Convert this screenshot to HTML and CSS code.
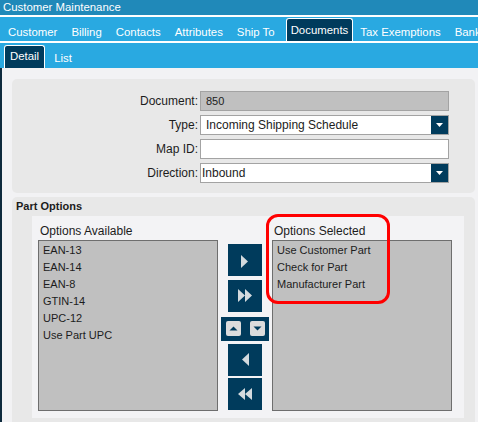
FILE: index.html
```html
<!DOCTYPE html>
<html lang="en">
<head>
    <meta charset="UTF-8">
    <title>Customer Maintenance</title>
    <link rel="stylesheet" href="styles.css">
</head>
<body>

    <!-- Window title -->
    <div class="titlebar">Customer Maintenance</div>

    <!-- Main tabs -->
    <div class="tabs">
        <span class="tab">Customer</span>
        <span class="tab">Billing</span>
        <span class="tab">Contacts</span>
        <span class="tab">Attributes</span>
        <span class="tab">Ship To</span>
        <span class="tab active">Documents</span>
        <span class="tab">Tax Exemptions</span>
        <span class="tab">Banking</span>
    </div>

    <!-- Sub tabs -->
    <div class="subtabs">
        <span class="subtab active">Detail</span>
        <span class="subtab">List</span>
    </div>

    <div class="content">

        <!-- Document header fields -->
        <div class="panel form-panel">
            <label class="field-label">Document:</label>
            <div class="input readonly">850</div>

            <label class="field-label">Type:</label>
            <div class="input select type-select">
                <span>Incoming Shipping Schedule</span>
                <span class="select-btn"><svg width="7" height="4" viewBox="0 0 7 4"><path d="M0 0h7L3.5 4z" fill="#fff"/></svg></span>
            </div>

            <label class="field-label">Map ID:</label>
            <div class="input"></div>

            <label class="field-label">Direction:</label>
            <div class="input select dir-select">
                <span>Inbound</span>
                <span class="select-btn"><svg width="7" height="4" viewBox="0 0 7 4"><path d="M0 0h7L3.5 4z" fill="#fff"/></svg></span>
            </div>
        </div>

        <!-- Part options picker -->
        <div class="panel options-panel">
            <div class="panel-title">Part Options</div>
            <div class="picker">
                <div class="col-label">Options Available</div>
                <div></div>
                <div class="col-label">Options Selected</div>

                <div class="listbox">
                    <div class="item">EAN-13</div>
                    <div class="item">EAN-14</div>
                    <div class="item">EAN-8</div>
                    <div class="item">GTIN-14</div>
                    <div class="item">UPC-12</div>
                    <div class="item">Use Part UPC</div>
                </div>

                <div class="mover">
                    <button class="move-btn btn-add">
                        <svg width="34" height="32" viewBox="0 0 34 32"><path d="M13 11L20 17.5L13 24z" fill="#d3dade"/></svg>
                    </button>
                    <button class="move-btn btn-add-all">
                        <svg width="34" height="32" viewBox="0 0 34 32"><path d="M10 9L17 15.5L10 22zM17 9L24 15.5L17 22z" fill="#d3dade"/></svg>
                    </button>
                    <div class="order-btns">
                        <span class="order-btn"><svg width="15" height="15" viewBox="0 0 15 15"><path d="M3.5 9.5h8L7.5 5.5z" fill="#003b5c"/></svg></span>
                        <span class="order-btn"><svg width="15" height="15" viewBox="0 0 15 15"><path d="M3.5 5.5h8L7.5 9.5z" fill="#003b5c"/></svg></span>
                    </div>
                    <button class="move-btn btn-remove">
                        <svg width="34" height="32" viewBox="0 0 34 32"><path d="M21 9L14 15.5L21 22z" fill="#d3dade"/></svg>
                    </button>
                    <button class="move-btn btn-remove-all">
                        <svg width="34" height="32" viewBox="0 0 34 32"><path d="M17 10L10 16L17 22zM24 10L17 16L24 22z" fill="#d3dade"/></svg>
                    </button>
                </div>

                <div class="listbox">
                    <div class="item">Use Customer Part</div>
                    <div class="item">Check for Part</div>
                    <div class="item">Manufacturer Part</div>
                </div>

                <!-- red callout round the selected list -->
                <div class="callout"></div>
            </div>
        </div>

    </div>

</body>
</html>
```

FILE: styles.css
```css
body {
    margin: 0;
    width: 478px;
    height: 422px;
    overflow: hidden;
    font-family: "Liberation Sans", Arial, sans-serif;
    color: #1c1c1c;
    background-color: #f2f2f4;
}

.titlebar {
    height: 15px;
    line-height: 15px;
    padding-left: 3px;
    background-color: #2089b9;
    color: white;
    font-size: 11.4px;
    border-bottom: 2px solid white;
}

.tabs {
    height: 24px;
    background-color: #29a9e1;
    border-bottom: 2px solid white;
    display: flex;
    padding-left: 5px;
    white-space: nowrap;
    overflow: hidden;
}

.tab {
    height: 24px;
    box-sizing: border-box;
    padding: 7px 3px 0 3px;
    margin-right: 8px;
    line-height: 16px;
    font-size: 11.4px;
    color: white;
}

.tab.active {
    margin-top: 1px;
    margin-right: 4px;
    padding-top: 3px;
    padding-left: 4px;
    padding-right: 4px;
    background-color: #003b5c;
    border: 1px solid white;
    border-bottom: none;
    border-radius: 3px 3px 0 0;
}

.subtabs {
    height: 25px;
    background-color: #29a9e1;
    display: flex;
    padding-left: 4px;
}

.subtab {
    margin-top: 2px;
    height: 23px;
    box-sizing: border-box;
    padding: 5px 8px 0 9px;
    line-height: 16px;
    font-size: 11.4px;
    color: white;
}

.subtab.active {
    padding: 2px 5px 0 5px;
    background-color: #003b5c;
    border: 1px solid white;
    border-bottom: none;
    border-radius: 3px 3px 0 0;
}

.content {
    height: 354px;
    border-left: 2px solid #0e2a3d;
    padding: 11px 0 0 10px;
}

.panel {
    width: 463px;
    background-color: #e8e8e8;
    border-radius: 5px;
}

/* Document fields */
.form-panel {
    height: 114px;
    box-sizing: border-box;
    padding-top: 12px;
    display: grid;
    grid-template-columns: 186px 249px;
    grid-auto-rows: 20px;
    column-gap: 2px;
    row-gap: 4px;
}

.field-label {
    text-align: right;
    line-height: 20px;
    font-size: 12px;
}

.input {
    height: 20px;
    box-sizing: border-box;
    border: 1px solid #a3a3a3;
    background-color: white;
    font-size: 12px;
    line-height: 18px;
    padding-left: 5px;
    display: flex;
}

.input.readonly {
    background-color: #c0c0c0;
    font-size: 11px;
}

.input.dir-select {
    padding-left: 1px;
}

.select span:first-child {
    flex: 1;
}

.select-btn {
    width: 17px;
    background-color: #003b5c;
    display: flex;
    align-items: center;
    justify-content: center;
}

/* Part options */
.options-panel {
    margin-top: 4px;
    height: 240px;
    padding-top: 2px;
    box-sizing: border-box;
}

.panel-title {
    padding-left: 4px;
    font-size: 11px;
    font-weight: bold;
    line-height: 14px;
}

.picker {
    position: relative;
    margin: 3px 0 0 20px;
    width: 432px;
    box-sizing: border-box;
    padding: 8px 12px 7px 6px;
    background-color: #f3f3f5;
    display: grid;
    grid-template-columns: 180px 54px 180px;
}

.col-label {
    padding-left: 2px;
    font-size: 12px;
    line-height: 14px;
    margin-bottom: 2px;
}

.listbox {
    height: 171px;
    box-sizing: border-box;
    border: 1px solid #6e6e6e;
    background-color: #c0c0c0;
    padding: 1px 4px;
}

.item {
    font-size: 11px;
    line-height: 17px;
}

.mover {
    display: flex;
    flex-direction: column;
    align-items: center;
    padding-top: 4px;
}

.move-btn {
    width: 34px;
    height: 32px;
    padding: 0;
    border: none;
    background-color: #003b5c;
    display: block;
}

.move-btn svg {
    display: block;
}

.btn-add-all {
    margin-top: 4px;
}

.order-btns {
    margin-top: 5px;
    width: 48px;
    height: 24px;
    box-sizing: border-box;
    padding: 4px 4px 0 5px;
    background-color: #003b5c;
    display: flex;
    justify-content: space-between;
}

.order-btn {
    width: 15px;
    height: 15px;
    background-color: #dcdcdc;
    border-radius: 2px;
}

.order-btn svg {
    display: block;
}

.btn-remove {
    margin-top: 3px;
}

.btn-remove-all {
    margin-top: 2px;
}

.callout {
    position: absolute;
    left: 234px;
    top: -2px;
    width: 124px;
    height: 90px;
    box-sizing: border-box;
    border: 3px solid #f00;
    border-radius: 12px;
}
```
